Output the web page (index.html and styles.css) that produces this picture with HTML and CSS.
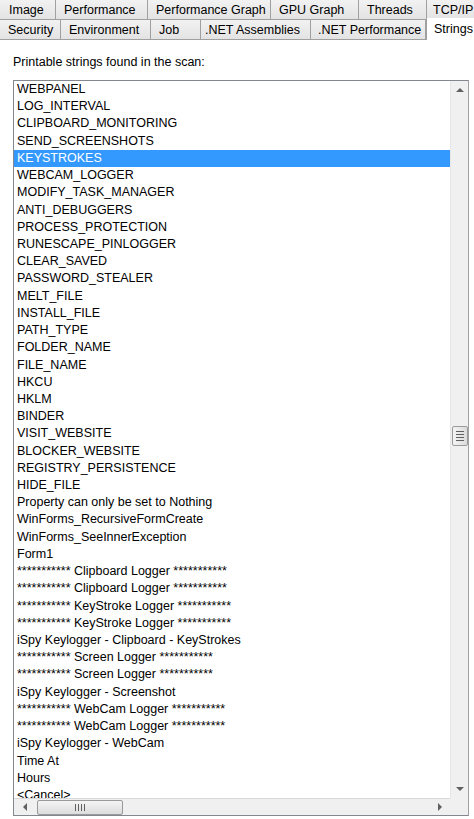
FILE: index.html
```html
<!DOCTYPE html>
<html>
<head>
<meta charset="utf-8">
<link rel="stylesheet" href="styles.css">
</head>
<body>
<div class="tabs">
  <div class="row row1">
    <div class="tab t1a">Image</div>
    <div class="tab t1b">Performance</div>
    <div class="tab t1c">Performance Graph</div>
    <div class="tab t1d">GPU Graph</div>
    <div class="tab t1e">Threads</div>
    <div class="tab t1f">TCP/IP</div>
  </div>
  <div class="row row2">
    <div class="tab t2a">Security</div>
    <div class="tab t2b">Environment</div>
    <div class="tab t2c">Job</div>
    <div class="tab t2d">.NET Assemblies</div>
    <div class="tab t2e">.NET Performance</div>
    <div class="tab t2f sel">Strings</div>
  </div>
</div>
<div class="page">
  <div class="label">Printable strings found in the scan:</div>
  <div class="listbox">
    <div class="items">
      <div class="item">WEBPANEL</div>
      <div class="item">LOG_INTERVAL</div>
      <div class="item">CLIPBOARD_MONITORING</div>
      <div class="item">SEND_SCREENSHOTS</div>
      <div class="item selected">KEYSTROKES</div>
      <div class="item">WEBCAM_LOGGER</div>
      <div class="item">MODIFY_TASK_MANAGER</div>
      <div class="item">ANTI_DEBUGGERS</div>
      <div class="item">PROCESS_PROTECTION</div>
      <div class="item">RUNESCAPE_PINLOGGER</div>
      <div class="item">CLEAR_SAVED</div>
      <div class="item">PASSWORD_STEALER</div>
      <div class="item">MELT_FILE</div>
      <div class="item">INSTALL_FILE</div>
      <div class="item">PATH_TYPE</div>
      <div class="item">FOLDER_NAME</div>
      <div class="item">FILE_NAME</div>
      <div class="item">HKCU</div>
      <div class="item">HKLM</div>
      <div class="item">BINDER</div>
      <div class="item">VISIT_WEBSITE</div>
      <div class="item">BLOCKER_WEBSITE</div>
      <div class="item">REGISTRY_PERSISTENCE</div>
      <div class="item">HIDE_FILE</div>
      <div class="item">Property can only be set to Nothing</div>
      <div class="item">WinForms_RecursiveFormCreate</div>
      <div class="item">WinForms_SeeInnerException</div>
      <div class="item">Form1</div>
      <div class="item">*********** Clipboard Logger ***********</div>
      <div class="item">*********** Clipboard Logger ***********</div>
      <div class="item">*********** KeyStroke Logger ***********</div>
      <div class="item">*********** KeyStroke Logger ***********</div>
      <div class="item">iSpy Keylogger - Clipboard - KeyStrokes</div>
      <div class="item">*********** Screen Logger ***********</div>
      <div class="item">*********** Screen Logger ***********</div>
      <div class="item">iSpy Keylogger - Screenshot</div>
      <div class="item">*********** WebCam Logger ***********</div>
      <div class="item">*********** WebCam Logger ***********</div>
      <div class="item">iSpy Keylogger - WebCam</div>
      <div class="item">Time At</div>
      <div class="item">Hours</div>
      <div class="item">&lt;Cancel&gt;</div>
    </div>
    <div class="vscroll">
      <div class="arrow up"></div>
      <div class="vtrack">
        <div class="vthumb"><span></span><span></span><span></span><span></span></div>
      </div>
      <div class="arrow down"></div>
    </div>
    <div class="hscroll">
      <div class="arrow left"></div>
      <div class="htrack">
        <div class="hthumb"><span></span><span></span><span></span><span></span></div>
      </div>
      <div class="arrow right"></div>
    </div>
    <div class="corner"></div>
  </div>
</div>
</body>
</html>
```
FILE: styles.css
```css
html, body {
  margin: 0;
  padding: 0;
  background: #ffffff;
  width: 474px;
  height: 819px;
  overflow: hidden;
  font-family: "Liberation Sans", Arial, sans-serif;
  font-size: 13px;
  color: #000;
}
.tabs {
  display: flex;
  flex-direction: column;
  border-bottom: 1px solid #a0a0a0;
  background: #fff;
}
.row {
  display: flex;
  height: 19px;
}
.row1 { height: 20px; }
.tab {
  box-sizing: border-box;
  border: 1px solid #a0a0a0;
  border-top: none;
  border-left: none;
  background: linear-gradient(#f2f2f2, #e3e3e3);
  display: flex;
  align-items: center;
  justify-content: flex-start;
  padding-left: 8px;
  white-space: nowrap;
  overflow: hidden;
  flex: none;
  font-size: 12.5px;
}
.row1 .tab { padding-top: 1px; }
.row2 .tab { border-bottom: none; }
.t1a { width: 56px; padding-left: 9px; }
.t1b { width: 92px; }
.t1c { width: 123px; }
.t1d { width: 88px; }
.t1e { width: 68px; }
.t1f { flex: 1; padding-left: 6px; border-right: none; }
.t2a { width: 61px; }
.t2b { width: 90px; }
.t2c { width: 50px; }
.t2d { width: 110px; padding-left: 4px; }
.t2e { width: 115px; padding-left: 7px; }
.t2f { flex: 1; padding-left: 7px; border-right: none; }
.tab.sel {
  background: #ffffff;
  margin-top: -2px;
  height: 22px;
  border-left: 1px solid #a0a0a0;
  position: relative;
  z-index: 1;
  margin-bottom: -1px;
}
.page {
  padding: 15px 6px 0 13px;
}
.label {
  height: 15px;
  line-height: 15px;
  margin-bottom: 10px;
  font-size: 12.5px;
}
.listbox {
  box-sizing: border-box;
  width: 456px;
  height: 736px;
  border: 1px solid #828790;
  border-right-color: #a0a0a0;
  display: grid;
  grid-template-columns: 1fr 18px;
  grid-template-rows: 1fr 17px;
  background: #fff;
}
.items {
  overflow: hidden;
  font-size: 12.5px;
}
.item {
  height: 17.22px;
  line-height: 17.22px;
  padding-left: 3px;
  white-space: nowrap;
}
.item.selected {
  background: #3399ff;
  color: #fff;
}
.vscroll {
  background: #f0f0f0;
  border-left: 1px solid #e6e6e6;
  display: flex;
  flex-direction: column;
}
.hscroll {
  background: #f0f0f0;
  border-top: 1px solid #d8d8d8;
  display: flex;
  align-items: stretch;
}
.corner { background: #f0f0f0; }
.arrow {
  flex: none;
  width: 17px;
  height: 17px;
  position: relative;
}
.arrow::after {
  content: "";
  position: absolute;
  width: 0;
  height: 0;
}
.arrow.up::after {
  left: 5px; top: 7px;
  border-left: 4px solid transparent;
  border-right: 4px solid transparent;
  border-bottom: 4px solid #606060;
}
.arrow.down::after {
  left: 5px; top: 6px;
  border-left: 4px solid transparent;
  border-right: 4px solid transparent;
  border-top: 4px solid #606060;
}
.arrow.left::after {
  left: 9px; top: 4px;
  border-top: 4px solid transparent;
  border-bottom: 4px solid transparent;
  border-right: 4px solid #606060;
}
.arrow.right::after {
  left: 5px; top: 4px;
  border-top: 4px solid transparent;
  border-bottom: 4px solid transparent;
  border-left: 4px solid #606060;
}
.vtrack {
  flex: 1;
  padding-top: 328px;
}
.vthumb {
  box-sizing: border-box;
  margin-left: 1px;
  width: 16px;
  height: 20px;
  border: 1px solid #9a9a9a;
  border-radius: 2px;
  background: linear-gradient(90deg, #f4f4f4, #dcdcdc);
  display: flex;
  flex-direction: column;
  align-items: center;
  justify-content: center;
  gap: 2px;
}
.vthumb span {
  display: block;
  width: 8px;
  height: 1px;
  background: #606060;
}
.htrack {
  flex: 1;
  display: flex;
  align-items: center;
  padding-left: 6px;
}
.hthumb {
  box-sizing: border-box;
  width: 86px;
  height: 15px;
  border: 1px solid #9a9a9a;
  border-radius: 2px;
  background: linear-gradient(#f4f4f4, #dcdcdc);
  display: flex;
  align-items: center;
  justify-content: center;
  gap: 2px;
}
.hthumb span {
  display: block;
  width: 1px;
  height: 7px;
  background: #606060;
}
```
